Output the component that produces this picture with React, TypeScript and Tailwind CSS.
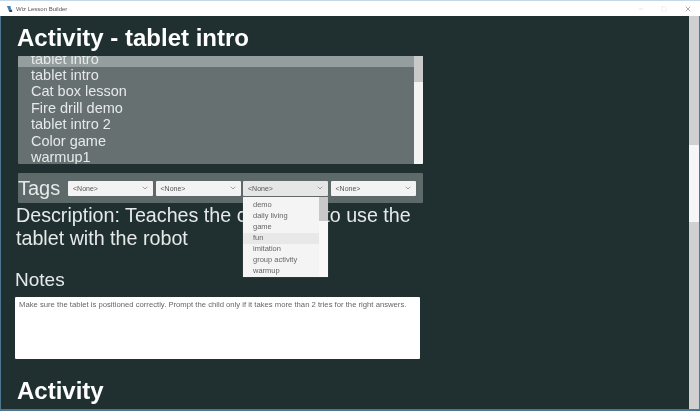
import { ChevronDown, Minus, Square, X } from "lucide-react";

const LESSONS = ["tablet intro", "Cat box lesson", "Fire drill demo", "tablet intro 2", "Color game", "warmup1"];
const TAG_OPTIONS = ["demo", "daily living", "game", "fun", "imitation", "group activity", "warmup"];

function TitleBar() {
  return (
    <div className="flex h-[16px] shrink-0 items-center justify-between border-t border-[#c4d8e8] bg-white pl-[6px] pr-[8px]">
      <div className="flex items-center gap-[3px]">
        <svg width="7" height="8" viewBox="0 0 8 9">
          <path d="M1 1 L5 1 L6 5 L3 6 Z" fill="#3d7fb5" />
          <path d="M3 6 L7 5 L7 8 L4 8 Z" fill="#24506f" />
        </svg>
        <span className="text-[6px] leading-none text-[#555]">Wiz Lesson Builder</span>
      </div>
      <div className="flex items-center gap-[17px] text-[#999]">
        <Minus size={6} strokeWidth={1} />
        <Square size={6} strokeWidth={1} className="text-[#ccc]" />
        <X size={8} strokeWidth={1.5} className="text-[#555]" />
      </div>
    </div>
  );
}

function TagSelect({ open }: { open?: boolean }) {
  return (
    <div className="relative">
      <div className={`flex h-[15px] w-[85px] items-center justify-between rounded-[1px] pl-[5px] pr-[4px] ${open ? "bg-[#e6e6e6]" : "bg-[#f3f3f3]"}`}>
        <span className="text-[7px] leading-none text-[#555]">&lt;None&gt;</span>
        <ChevronDown size={8} className="text-[#777]" />
      </div>
      {open && (
        <div className="absolute left-0 top-[16px] z-10 flex h-[80px] w-[85px] overflow-hidden bg-[#f4f4f4] shadow-[0_0_1px_#666]">
          <div className="flex flex-1 flex-col pt-[3px]">
            {TAG_OPTIONS.map(o => (
              <div key={o} className={`flex h-[11px] items-center pl-[10px] text-[7.5px] leading-none text-[#666] ${o === "fun" ? "bg-[#e8e8e8]" : ""}`}>
                {o}
              </div>
            ))}
          </div>
          <div className="w-[9px] shrink-0 bg-[#f8f8f8]">
            <div className="h-[24px] bg-[#c9c9c9]" />
          </div>
        </div>
      )}
    </div>
  );
}

function ActivityList() {
  return (
    <div className="ml-[3px] mt-[3px] flex h-[108px] w-[405px] overflow-hidden rounded-[1px] bg-[#667070]">
      <div className="min-w-0 flex-1 text-[14.5px] leading-[16.5px] text-[#e6e9e9]">
        <div className="flex h-[11px] items-end overflow-hidden bg-[#959e9e] pl-[13px]">
          <span className="shrink-0">tablet intro</span>
        </div>
        {LESSONS.map(name => (
          <div key={name} className="h-[16.4px] whitespace-nowrap pl-[13px]">{name}</div>
        ))}
      </div>
      <div className="w-[9px] shrink-0 bg-[#f3f3f3]">
        <div className="h-[26px] bg-[#c9c9c9]" />
      </div>
    </div>
  );
}

export default function App() {
  return (
    <div className="flex h-[411px] w-[700px] flex-col overflow-hidden bg-white font-['Liberation_Sans',Arial,sans-serif] blur-[0.4px]">
      <TitleBar />
      <div className="flex min-h-0 flex-1 border-x border-x-[#4d7690] border-b-2 border-b-[#4d7690]">
        <main className="min-w-0 flex-1 overflow-hidden bg-[#203030] pl-[14px]">
          <h1 className="pt-[7px] pl-[2px] text-[24px] font-bold leading-[30px] text-white">Activity - tablet intro</h1>
          <ActivityList />
          <div className="ml-[3px] mt-[9px] flex h-[30px] w-[405px] items-center rounded-[1px] bg-[#5e6a6a]">
            <span className="w-[50px] text-[20px] leading-none text-[#e6e9e9]">Tags</span>
            <div className="flex gap-[2.5px]">
              <TagSelect />
              <TagSelect />
              <TagSelect open />
              <TagSelect />
            </div>
          </div>
          <p className="mt-[1px] ml-[1px] w-[410px] text-[19.7px] leading-[23px] text-[#e6e9e9]">
            Description: Teaches the child how to use the tablet with the robot
          </p>
          <div className="mt-[19px] text-[19px] leading-[21px] text-[#e6e9e9]">Notes</div>
          <div className="mt-[7px] h-[62px] w-[405px] rounded-[1px] bg-white px-[4px] py-[3px] text-[7.7px] leading-[9px] text-[#666]">
            Make sure the tablet is positioned correctly. Prompt the child only if it takes more than 2 tries for the right answers.
          </div>
          <h2 className="ml-[2px] mt-[17px] text-[24px] font-bold leading-[30px] text-white">Activity</h2>
        </main>
        <div className="flex w-[10px] shrink-0 flex-col bg-[#d0d0d0]">
          <div className="h-[129px]" />
          <div className="h-[77px] bg-[#f6f6f6]" />
        </div>
      </div>
    </div>
  );
}
